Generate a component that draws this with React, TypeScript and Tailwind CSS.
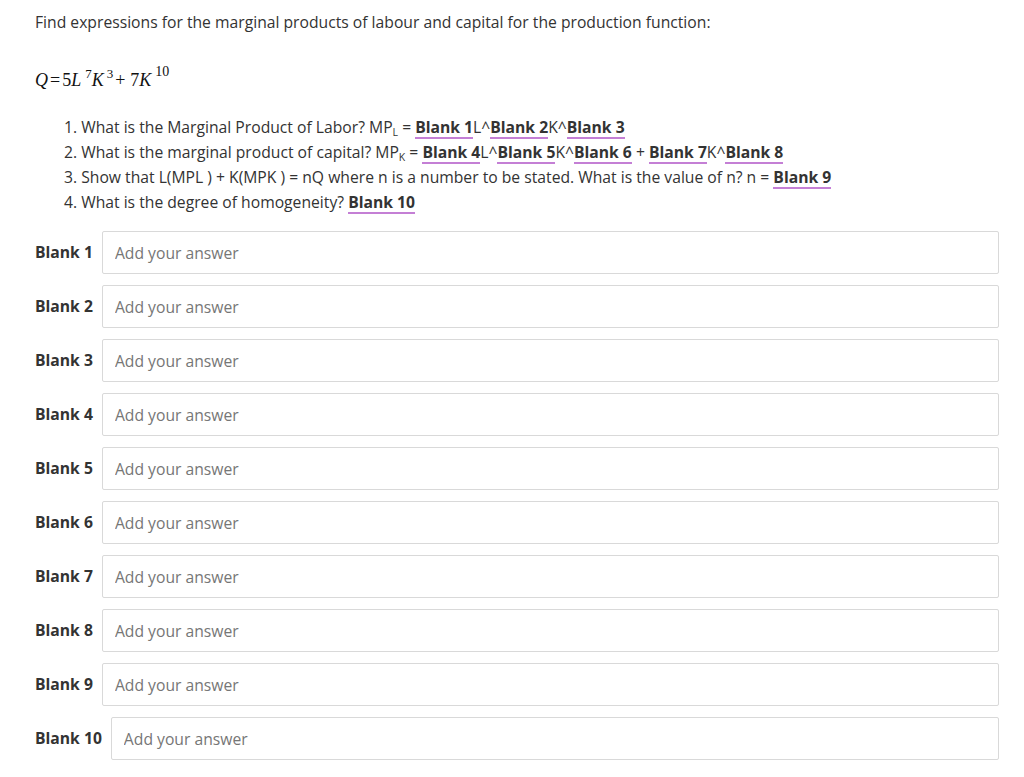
import React from "react";

const B = ({ children }: { children: React.ReactNode }) => (
  <span className="inline-block border-b-2 border-[#c47fd5] font-bold leading-[20px] text-[#333]">
    {children}
  </span>
);

const blanks = ["Blank 1", "Blank 2", "Blank 3", "Blank 4", "Blank 5", "Blank 6", "Blank 7", "Blank 8", "Blank 9", "Blank 10"];

export default function App() {
  return (
    <div className="min-h-[777px] bg-white pl-[35px] pr-[25px] pt-[11px] font-['Open_Sans',sans-serif] text-[15.7px] text-[#333]">
      <p className="leading-[22px]">Find expressions for the marginal products of labour and capital for the production function:</p>
      <div className="mt-[36px] font-['Liberation_Serif',serif] text-[18px] leading-[22px] text-[#111]">
        <i>Q</i>
        <span className="mx-[2px]">=</span>5<i>L</i>
        <sup className="-top-[0.65em] ml-[4px] text-[13px]">7</sup>
        <i>K</i>
        <sup className="-top-[0.65em] ml-[3px] text-[13px]">3</sup>
        <span className="ml-[2px] mr-[5px]">+</span>7<i>K</i>
        <sup className="-top-[0.7em] ml-[4px] text-[14px]">10</sup>
      </div>
      <ol className="ml-[29px] mt-[24px] leading-[25px]">
        <li>
          1. What is the Marginal Product of Labor? MP<sub className="text-[10.5px]">L</sub> = <B>Blank 1</B>L^<B>Blank 2</B>K^<B>Blank 3</B>
        </li>
        <li>
          2. What is the marginal product of capital? MP<sub className="text-[10.5px]">K</sub> = <B>Blank 4</B>L^<B>Blank 5</B>K^<B>Blank 6</B> + <B>Blank 7</B>K^<B>Blank 8</B>
        </li>
        <li>
          3. Show that L(MPL ) + K(MPK ) = nQ where n is a number to be stated. What is the value of n? n = <B>Blank 9</B>
        </li>
        <li>
          4. What is the degree of homogeneity? <B>Blank 10</B>
        </li>
      </ol>
      <div className="mt-[16px] flex flex-col gap-[11px]">
        {blanks.map((b) => (
          <div key={b} className="flex items-center">
            <span className="mr-[9px] font-bold text-[#333]">{b}</span>
            <input
              placeholder="Add your answer"
              className="h-[43px] flex-1 rounded-[2px] border border-[#d9d9d9] px-[12px] text-[15.7px] text-[#333] outline-none placeholder:text-[#767676]"
            />
          </div>
        ))}
      </div>
    </div>
  );
}
